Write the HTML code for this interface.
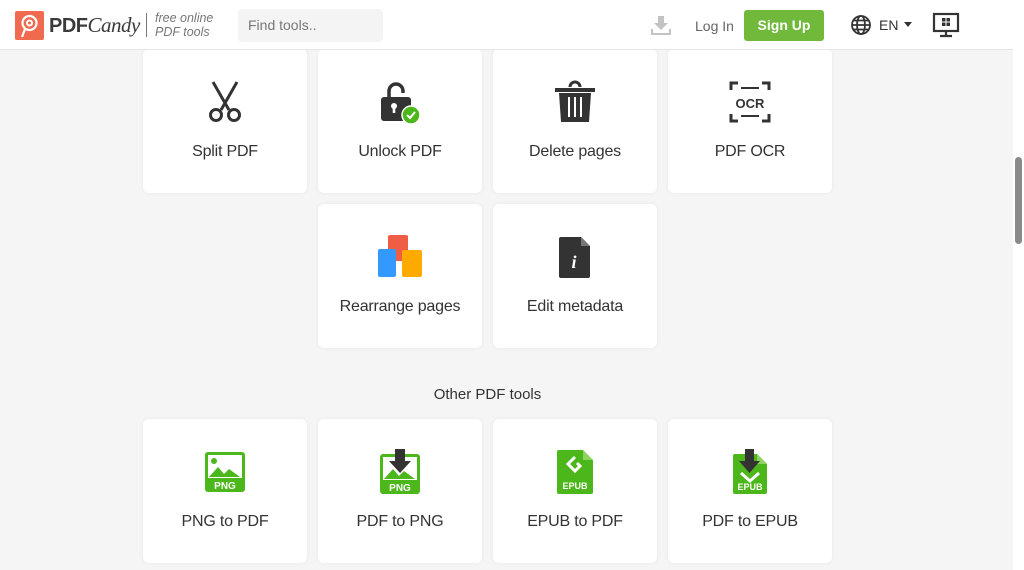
<!DOCTYPE html>
<html><head><meta charset="utf-8"><style>
*{margin:0;padding:0;box-sizing:border-box}
body{width:1024px;height:570px;overflow:hidden;background:#f5f5f5;font-family:"Liberation Sans",sans-serif;position:relative}
.hdr{position:absolute;left:0;top:0;width:1013px;height:50px;background:#fff;border-bottom:1px solid #e6e6e6;z-index:5}
.sb{position:absolute;left:1013px;top:0;width:11px;height:570px;background:#fff;z-index:6}
.thumb{position:absolute;left:2px;top:157px;width:7px;height:87px;background:#8a8a8a;border-radius:4px}
.card{position:absolute;width:164px;height:144px;background:#fff;border-radius:6px;box-shadow:0 0 4px rgba(0,0,0,.06)}
.card .ic{position:absolute;left:0;right:0;top:30px;height:46px;display:flex;justify-content:center;align-items:center}
.card .t{position:absolute;left:0;right:0;top:94px;text-align:center;font-size:16px;color:#333;letter-spacing:-.2px}
</style></head><body>
<div class="hdr">
 <div style="position:absolute;left:15px;top:11px;width:29px;height:29px;background:#ef6a4f;border-radius:2px">
  <svg width="29" height="29" viewBox="0 0 29 29"><circle cx="14.5" cy="12" r="7" fill="none" stroke="#fff" stroke-width="2.2"/><circle cx="14.5" cy="12" r="2.5" fill="none" stroke="#fff" stroke-width="2"/><path d="M10 18 L7 26" stroke="#fff" stroke-width="2.2"/></svg>
 </div>
 <div style="position:absolute;left:49px;top:13px;font-size:20px;font-weight:bold;color:#3a3a3a;letter-spacing:-.5px">PDF<span style="font-family:'Liberation Serif',serif;font-style:italic;font-weight:normal;font-size:21px">Candy</span></div>
 <div style="position:absolute;left:146px;top:13px;width:1px;height:24px;background:#777"></div>
 <div style="position:absolute;left:155px;top:11px;font-size:12.5px;font-style:italic;color:#777;line-height:14px">free online<br>PDF tools</div>
 <div style="position:absolute;left:238px;top:9px;width:145px;height:33px;background:#f4f4f4;border-radius:4px;font-size:14px;color:#777;padding:8px 10px">Find tools..</div>
 <svg style="position:absolute;left:650px;top:14px" width="22" height="22" viewBox="0 0 22 22"><path d="M8 2h6v7h4l-7 7-7-7h4z" fill="#c3c3c3"/><path d="M2 15v5h18v-5" fill="none" stroke="#c3c3c3" stroke-width="2"/></svg>
 <div style="position:absolute;left:695px;top:18px;font-size:14px;color:#666">Log In</div>
 <div style="position:absolute;left:744px;top:10px;width:80px;height:31px;background:#71b93b;border-radius:3px;color:#fff;font-weight:bold;font-size:14px;text-align:center;line-height:31px">Sign Up</div>
 <svg style="position:absolute;left:850px;top:14px" width="22" height="22" viewBox="0 0 22 22" fill="none" stroke="#333" stroke-width="1.8"><circle cx="11" cy="11" r="9"/><ellipse cx="11" cy="11" rx="4" ry="9"/><path d="M2 11h18M3.5 6.5h15M3.5 15.5h15"/></svg>
 <div style="position:absolute;left:879px;top:17px;font-size:14px;color:#333">EN</div>
 <div style="position:absolute;left:904px;top:22px;border:4px solid transparent;border-top:5px solid #333"></div>
 <svg style="position:absolute;left:932px;top:12px" width="28" height="27" viewBox="0 0 28 27"><rect x="2" y="2" width="24" height="17" fill="none" stroke="#333" stroke-width="2.2"/><path d="M14 19v4M8 24h12" stroke="#333" stroke-width="2.2"/><rect x="10" y="6" width="3.5" height="3.5" fill="#333"/><rect x="14.5" y="6" width="3.5" height="3.5" fill="#333"/><rect x="10" y="10.5" width="3.5" height="3.5" fill="#333"/><rect x="14.5" y="10.5" width="3.5" height="3.5" fill="#333"/></svg>
</div>
<div class="sb"><div class="thumb"></div></div>

<div class="card" style="left:143px;top:49px"><div class="ic"><svg width="40" height="44" viewBox="0 0 40 44" fill="none" stroke="#333" stroke-width="3"><path d="M8 2l16 28M32 2L16 30"/><circle cx="11" cy="35" r="5.5"/><circle cx="29" cy="35" r="5.5"/></svg></div><div class="t">Split PDF</div></div>
<div class="card" style="left:318px;top:49px"><div class="ic"><svg width="48" height="46" viewBox="0 0 48 46"><path d="M13 20v-8a7 7 0 0 1 14 0v2" fill="none" stroke="#333" stroke-width="3.5"/><rect x="5" y="18" width="30" height="24" rx="3" fill="#333"/><circle cx="18" cy="27" r="3" fill="#fff"/><rect x="16.7" y="27" width="2.6" height="7" fill="#fff"/><circle cx="35" cy="36" r="9" fill="#4cb71a" stroke="#fff" stroke-width="1.5"/><path d="M31 36l3 3 5-6" fill="none" stroke="#fff" stroke-width="2"/></svg></div><div class="t">Unlock PDF</div></div>
<div class="card" style="left:493px;top:49px"><div class="ic"><svg width="42" height="44" viewBox="0 0 42 44"><path d="M16 7a5 5 0 0 1 10 0" fill="none" stroke="#333" stroke-width="3"/><rect x="1" y="8" width="40" height="4" fill="#333"/><path d="M5 13h32l-2 29H7z" fill="#333"/><path d="M15 17v20M21 17v20M27 17v20" stroke="#fff" stroke-width="2"/></svg></div><div class="t">Delete pages</div></div>
<div class="card" style="left:668px;top:49px"><div class="ic"><svg width="42" height="44" viewBox="0 0 42 44" fill="none" stroke="#333" stroke-width="3"><path d="M2 10V3h7M33 3h7v7M40 34v7h-7M9 41H2v-7"/><path d="M12 8h18M12 36h18" stroke-width="2"/><text x="21" y="28" text-anchor="middle" font-family="Liberation Sans" font-weight="bold" font-size="13" fill="#333" stroke="none">OCR</text></svg></div><div class="t">PDF OCR</div></div>

<div class="card" style="left:318px;top:204px"><div class="ic"><svg width="46" height="46" viewBox="0 0 46 46"><rect x="11" y="1" width="20" height="26" rx="2" fill="#ef5d45"/><rect x="1" y="15" width="18" height="28" rx="2" fill="#3399ff"/><rect x="25" y="16" width="20" height="27" rx="2" fill="#ffaa00"/></svg></div><div class="t">Rearrange pages</div></div>
<div class="card" style="left:493px;top:204px"><div class="ic"><svg width="34" height="44" viewBox="0 0 34 44"><path d="M3 2h20l9 9v30a2 2 0 0 1-2 2H3a2 2 0 0 1-2-2V4a2 2 0 0 1 2-2z" fill="#333"/><path d="M23 2v9h9" fill="#777"/><text x="16" y="33" text-anchor="middle" font-family="Liberation Serif" font-style="italic" font-weight="bold" font-size="18" fill="#fff">i</text></svg></div><div class="t">Edit metadata</div></div>

<div style="position:absolute;left:143px;width:689px;top:386px;text-align:center;font-size:15px;color:#333">Other PDF tools</div>

<div class="card" style="left:143px;top:419px"><div class="ic"><svg width="42" height="42" viewBox="0 0 42 42"><rect x="1" y="1" width="40" height="40" rx="3" fill="#4cb71a"/><rect x="4" y="4" width="34" height="23" fill="#fff"/><circle cx="10" cy="10" r="3" fill="#4cb71a"/><path d="M5 26l9-10 6 7 5-5 11 8z" fill="#4cb71a"/><text x="21" y="38" text-anchor="middle" font-family="Liberation Sans" font-weight="bold" font-size="10" fill="#fff">PNG</text></svg></div><div class="t">PNG to PDF</div></div>
<div class="card" style="left:318px;top:419px"><div class="ic"><svg width="42" height="46" viewBox="0 0 42 46"><rect x="1" y="5" width="40" height="40" rx="3" fill="#4cb71a"/><rect x="4" y="8" width="34" height="23" fill="#fff"/><path d="M5 30l9-10 6 7 5-5 11 8z" fill="#4cb71a"/><path d="M16 0h10v12h6L21 24 10 12h6z" fill="#333"/><text x="21" y="42" text-anchor="middle" font-family="Liberation Sans" font-weight="bold" font-size="10" fill="#fff">PNG</text></svg></div><div class="t">PDF to PNG</div></div>
<div class="card" style="left:493px;top:419px"><div class="ic"><svg width="38" height="46" viewBox="0 0 38 46"><path d="M3 1h24l10 10v32a2 2 0 0 1-2 2H3a2 2 0 0 1-2-2V3a2 2 0 0 1 2-2z" fill="#4cb71a"/><path d="M27 1v10h10" fill="#8fd460"/><path d="M19 8l-7 7 7 7 5-5-3-3" fill="none" stroke="#fff" stroke-width="3"/><text x="19" y="40" text-anchor="middle" font-family="Liberation Sans" font-weight="bold" font-size="9" fill="#fff">EPUB</text></svg></div><div class="t">EPUB to PDF</div></div>
<div class="card" style="left:668px;top:419px"><div class="ic"><svg width="36" height="46" viewBox="0 0 36 46"><path d="M3 5h22l10 10v28a2 2 0 0 1-2 2H3a2 2 0 0 1-2-2V7a2 2 0 0 1 2-2z" fill="#4cb71a"/><path d="M25 5v10h10" fill="#8fd460"/><path d="M9 24l9 8 9-8" fill="none" stroke="#fff" stroke-width="3"/><path d="M13 0h9v12h6L17.5 24 7 12h6z" fill="#333"/><text x="18" y="41" text-anchor="middle" font-family="Liberation Sans" font-weight="bold" font-size="9" fill="#fff">EPUB</text></svg></div><div class="t">PDF to EPUB</div></div>
</body></html>
